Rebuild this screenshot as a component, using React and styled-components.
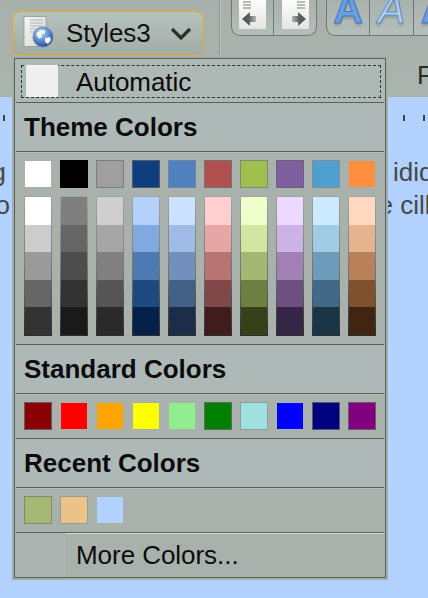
import React from "react";
import styled, { createGlobalStyle } from "styled-components";

const GlobalStyle = createGlobalStyle`
  html, body {
    margin: 0;
    padding: 0;
    background: #b3d1fe;
    font-family: "Liberation Sans", Arial, sans-serif;
    overflow: hidden;
  }
`;

const themeTop = [
  ["#ffffff", "#a9b1ac"],
  ["#000000", "#000000"],
  ["#9f9f9f", "#7d7d7d"],
  ["#0f3d7d", "#4c5c70"],
  ["#4f81bd", "#6d87ab"],
  ["#b15050", "#7e6d6d"],
  ["#9fbf4f", "#7e8b6d"],
  ["#7f5f9f", "#6d6079"],
  ["#4fa0d0", "#7e8d98"],
  ["#ff8f3f", "#a9b1ac"],
];

const themeStacks = [
  ["#ffffff", "#cccccc", "#9a9a9a", "#666666", "#333333"],
  ["#7f7f7f", "#666666", "#4d4d4d", "#333333", "#1a1a1a"],
  ["#cfcfcf", "#a6a6a6", "#808080", "#555555", "#2a2a2a"],
  ["#b3d1fa", "#80a9e0", "#4d7ab3", "#1f4a80", "#05204a"],
  ["#cce0ff", "#a0bce6", "#7290bb", "#456087", "#1c2d47"],
  ["#ffcfcf", "#e6a6a6", "#b87373", "#804848", "#401c1c"],
  ["#efffcc", "#d3e69f", "#a4b874", "#6d8042", "#384019"],
  ["#ecd9ff", "#ccb2e6", "#a080b5", "#6d5080", "#362645"],
  ["#cbeaff", "#a0cce6", "#6c9cba", "#426a87", "#1a3645"],
  ["#ffd9bf", "#e6b38f", "#b88159", "#80512e", "#402511"],
];

const standard = [
  ["#8b0000", "#6b5a5a"],
  ["#ff0000", "#a9b1ac"],
  ["#ffa500", "#a9b1ac"],
  ["#ffff00", "#a9b1ac"],
  ["#90ee90", "#a3b8a3"],
  ["#008000", "#5a6b5a"],
  ["#a0e0e0", "#8f9d9d"],
  ["#0000ff", "#a9b1ac"],
  ["#000080", "#505a70"],
  ["#800080", "#6a5a6a"],
];

const recent = [
  ["#a6b873", "#808a70"],
  ["#ebc388", "#9c9c90"],
  ["#b3d1ff", "#a9b1ac"],
];

const Toolbar = styled.div`
  height: 97px;
  display: flex;
  background: linear-gradient(#a7b0ab, #aab4af);
  overflow: hidden;
`;

const StyleButton = styled.div`
  box-sizing: border-box;
  width: 192px;
  height: 45px;
  margin: 11px 0 0 12px;
  padding-left: 10px;
  display: flex;
  align-items: center;
  flex-shrink: 0;
  border: 1px solid #f0a51e;
  border-radius: 8px;
  background: linear-gradient(#b5c2be, #a3aca7);
  font-size: 26px;
  color: #111;
`;

const StyleName = styled.span`
  margin-left: 11px;
  width: 104px;
  letter-spacing: -0.1px;
`;

const ToolDivider = styled.div`
  width: 1px;
  height: 55px;
  margin-left: 15px;
  flex-shrink: 0;
  background: #8d9692;
  box-shadow: 1px 0 0 #b8c2be;
`;

const ToolColumn = styled.div`
  margin-left: 11px;
  display: flex;
  flex-direction: column;
  flex: 1;
  min-width: 0;
`;

const GroupRow = styled.div`
  display: flex;
  gap: 9px;
  height: 36px;
`;

const Group = styled.div`
  display: flex;
  flex-shrink: 0;
  height: 35px;
  border: 1px solid #6f7874;
  border-top: 0;
  border-radius: 0 0 9px 9px;
  background: linear-gradient(#a9b2ad, #b4bebb);
`;

const GroupCell = styled.div`
  box-sizing: border-box;
  width: ${(p) => p.$w}px;
  display: flex;
  justify-content: center;
  overflow: hidden;
  & + & {
    border-left: 1px solid #6f7874;
  }
`;

const IndentCell = styled(GroupCell)`
  align-items: flex-start;
`;

const BigA = styled.span`
  font-size: 41px;
  line-height: 30px;
  margin-top: -6px;
  font-weight: ${(p) => (p.$italic ? "normal" : "bold")};
  font-style: ${(p) => (p.$italic ? "italic" : "normal")};
  color: ${(p) => (p.$italic ? "#b9cfea" : "#6a9fe2")};
  -webkit-text-stroke: 1px ${(p) => (p.$italic ? "#5b8fd0" : "#3f78c4")};
  text-shadow: 0 3px 2px rgba(90, 98, 94, 0.3);
`;

const RulerLabel = styled.div`
  margin: 26px 0 0 186px;
  font-size: 26px;
  line-height: 26px;
  color: #2a2d2c;
  white-space: nowrap;
`;

const Page = styled.div`
  height: 501px;
  overflow: hidden;
`;

const Ticks = styled.div`
  display: flex;
  gap: 18px;
  padding: 18px 0 0 3px;
  height: 6px;
`;

const Tick = styled.i`
  display: block;
  flex-shrink: 0;
  width: 2px;
  height: 6px;
  background: #3c4246;
`;

const Lines = styled.div`
  margin-top: 35px;
  font-size: 26px;
  line-height: 33px;
  color: #44484c;
`;

const DocLine = styled.div`
  display: flex;
  justify-content: space-between;
`;

const LeftCut = styled.span`
  width: ${(p) => p.$w}px;
  display: flex;
  justify-content: flex-end;
  overflow: hidden;
  white-space: nowrap;
`;

const RightCut = styled.span`
  width: ${(p) => p.$w}px;
  overflow: hidden;
  white-space: nowrap;
`;

const Popup = styled.div`
  position: absolute;
  left: 14px;
  top: 58px;
  box-sizing: border-box;
  width: 372px;
  height: 520px;
  border: 1px solid #56605c;
  box-shadow: 0 0 0 2px #a5ada8;
  background: #a9b1ac;
  color: #0c0c0c;
`;

const Separator = styled.div`
  height: 1px;
  margin: 0 1px;
  background: #56605c;
  box-shadow: 0 1px 0 ${(p) => (p.$light ? "#d0dad6" : "#b3bdb9")};
`;

const AutoRow = styled.div`
  padding: 5px 5px 6px 11px;
  height: 32px;
  background: #aeb8b4;
`;

const AutoInner = styled.div`
  box-sizing: border-box;
  height: 33px;
  margin: 1px 0 0 -5px;
  display: flex;
  align-items: center;
  border: 1px dashed #2f3533;
  width: 360px;
`;

const AutoSwatch = styled.div`
  width: 32px;
  height: 32px;
  margin: -2px 18px 0 4px;
  background: #efefef;
`;

const MenuText = styled.span`
  font-size: 26px;
  line-height: 30px;
  letter-spacing: -0.05px;
`;

const Header = styled.div`
  height: 48px;
  padding-left: 9px;
  display: flex;
  align-items: center;
  background: #aeb9b7;
  font-size: 26px;
  font-weight: bold;
`;

const SwatchRow = styled.div`
  display: flex;
  gap: 8px;
  padding: 8px 0 8px 9px;
`;

const Swatch = styled.div`
  box-sizing: border-box;
  width: 28px;
  height: 28px;
  border: 1px solid ${(p) => p.$border};
  background: ${(p) => p.$color};
`;

const Stack = styled.div`
  width: 28px;
  height: 140px;
  box-sizing: border-box;
  display: flex;
  flex-direction: column;
  border: 1px solid;
  border-image: linear-gradient(#a0a6a2, #70756f 55%, #2c2f2e) 1;
`;

const StackCell = styled.div`
  flex: 1;
  background: ${(p) => p.$color};
`;

const ThemeRows = styled(SwatchRow)`
  padding-top: 0;
`;

const MoreRow = styled.div`
  display: flex;
  height: 44px;
`;

const MoreIconCol = styled.div`
  width: 51px;
  background: #abb4b1;
`;

const MoreLabel = styled.div`
  padding-left: 10px;
  display: flex;
  align-items: center;
`;

const IconSvg = styled.svg`
  flex-shrink: 0;
  margin-top: ${(p) => p.$top || 0}px;
`;

const StylesIcon = () => (
  <IconSvg width="32" height="32" viewBox="0 0 32 32" $top={-3}>
    <defs>
      <radialGradient id="globe" cx="40%" cy="30%" r="70%">
        <stop offset="0" stopColor="#c5dcf8" />
        <stop offset="0.55" stopColor="#5a8ed6" />
        <stop offset="1" stopColor="#27509c" />
      </radialGradient>
      <linearGradient id="sheet" x1="0" y1="0" x2="1" y2="1">
        <stop offset="0" stopColor="#f6f6f3" />
        <stop offset="1" stopColor="#d6d8d2" />
      </linearGradient>
    </defs>
    <rect x="1" y="0.5" width="22" height="30" fill="url(#sheet)" stroke="#8a8f8b" strokeWidth="0.7" />
    <path d="M7 4h13M7 7h13M7 10h13M7 13h9M7 16h7" stroke="#c2c4c4" strokeWidth="1.4" />
    <circle cx="20" cy="21" r="10" fill="url(#globe)" stroke="#6a78a8" strokeWidth="0.8" />
    <path d="M13.5 17l4-3 5 .5-1 3-3.5 1 1 3-3 1-2.5-3zM22 22l5-1 1 3-3 4-3-2z" fill="#f3f5ef" />
  </IconSvg>
);

const Chevron = () => (
  <IconSvg width="22" height="14" viewBox="0 0 22 14">
    <path d="M2 2l9 9 9-9" fill="none" stroke="#2a2f2e" strokeWidth="3.2" />
  </IconSvg>
);

const IndentIcon = ({ dir }) => {
  const id = `indent-${dir}`;
  const arrow =
    dir === "left"
      ? "M3 19l8-7v4h6v6h-6v4z"
      : "M24 19l-8-7v4h-6v6h6v4z";
  const lineX = dir === "left" ? 4 : 15;
  return (
    <svg width="27" height="29" viewBox="0 0 27 29">
      <defs>
        <linearGradient id={id} x1="0" y1="0" x2="0" y2="1">
          <stop offset="0" stopColor="#fdfdfb" />
          <stop offset="1" stopColor="#e4e5e1" />
        </linearGradient>
        <linearGradient id={`${id}-a`} x1={dir === "left" ? "0" : "1"} y1="0" x2={dir === "left" ? "1" : "0"} y2="0">
          <stop offset="0.45" stopColor="#555b57" />
          <stop offset="1" stopColor="#b5b8b4" />
        </linearGradient>
      </defs>
      <rect width="27" height="29" fill={`url(#${id})`} />
      <path
        d={`M${lineX} 2h8M${lineX} 5h8M${lineX} 8h8`}
        stroke="#a2a5a1"
        strokeWidth="1.3"
      />
      <path d={arrow} fill={`url(#${id}-a)`} />
    </svg>
  );
};

export default function App() {
  return (
    <>
      <GlobalStyle />
      <Toolbar>
        <StyleButton>
          <StylesIcon />
          <StyleName>Styles3</StyleName>
          <Chevron />
        </StyleButton>
        <ToolDivider />
        <ToolColumn>
          <GroupRow>
            <Group>
              <IndentCell $w={41}>
                <IndentIcon dir="left" />
              </IndentCell>
              <IndentCell $w={43}>
                <IndentIcon dir="right" />
              </IndentCell>
            </Group>
            <Group>
              <GroupCell $w={42}>
                <BigA>A</BigA>
              </GroupCell>
              <GroupCell $w={44}>
                <BigA $italic>A</BigA>
              </GroupCell>
              <GroupCell $w={44}>
                <BigA>A</BigA>
              </GroupCell>
            </Group>
          </GroupRow>
          <RulerLabel>Font</RulerLabel>
        </ToolColumn>
      </Toolbar>
      <Page>
        <Ticks>
          {Array.from({ length: 22 }, (_, i) => (
            <Tick key={i} />
          ))}
        </Ticks>
        <Lines>
          <DocLine>
            <LeftCut $w={6}>adipiscing</LeftCut>
            <RightCut $w={35}>idid</RightCut>
          </DocLine>
          <DocLine>
            <LeftCut $w={10}>ullamco</LeftCut>
            <RightCut $w={90}>esse cillum</RightCut>
          </DocLine>
        </Lines>
      </Page>
      <Popup>
        <AutoRow>
          <AutoInner>
            <AutoSwatch />
            <MenuText>Automatic</MenuText>
          </AutoInner>
        </AutoRow>
        <Separator />
        <Header>Theme Colors</Header>
        <Separator />
        <SwatchRow>
          {themeTop.map(([color, border]) => (
            <Swatch key={color} $color={color} $border={border} />
          ))}
        </SwatchRow>
        <ThemeRows>
          {themeStacks.map((cells, i) => (
            <Stack key={i}>
              {cells.map((color) => (
                <StackCell key={color} $color={color} />
              ))}
            </Stack>
          ))}
        </ThemeRows>
        <Separator />
        <Header>Standard Colors</Header>
        <Separator />
        <SwatchRow>
          {standard.map(([color, border]) => (
            <Swatch key={color} $color={color} $border={border} />
          ))}
        </SwatchRow>
        <Separator />
        <Header>Recent Colors</Header>
        <Separator />
        <SwatchRow>
          {recent.map(([color, border]) => (
            <Swatch key={color} $color={color} $border={border} />
          ))}
        </SwatchRow>
        <Separator $light />
        <MoreRow>
          <MoreIconCol />
          <MoreLabel>
            <MenuText>More Colors...</MenuText>
          </MoreLabel>
        </MoreRow>
      </Popup>
    </>
  );
}
